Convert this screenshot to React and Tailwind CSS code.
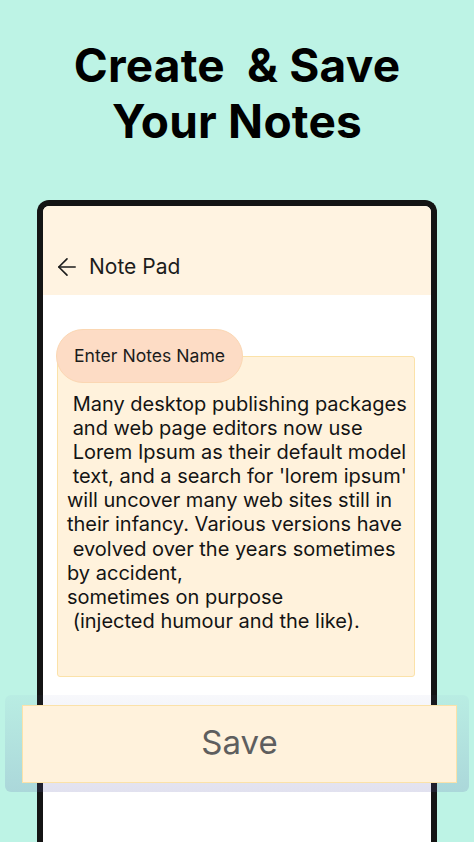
import { ArrowLeft } from 'lucide-react';

const lines = [
  ' Many desktop publishing packages',
  ' and web page editors now use',
  ' Lorem Ipsum as their default model',
  ' text, and a search for \'lorem ipsum\'',
  'will uncover many web sites still in',
  'their infancy. Various versions have',
  ' evolved over the years sometimes',
  'by accident,',
  'sometimes on purpose',
  ' (injected humour and the like).',
];

const App = () => {
  return (
    <div
      className="relative h-[842px] w-[474px] overflow-hidden bg-[#bdf3e5]"
      style={{ fontFamily: 'Inter, "Noto Sans", sans-serif' }}
    >
      <h1 className="pt-[37px] text-center text-[46px] font-bold leading-[56px] tracking-[0.2px] text-black whitespace-pre">
        {'Create  & Save\nYour Notes'}
      </h1>

      <div className="mx-[37px] mt-[51px] h-[700px] rounded-t-[12px] border-[6px] border-b-0 border-[#141414] bg-white">
        <div className="flex h-[89px] items-end rounded-t-[6px] bg-[#fff3e1] px-[10px] pb-[14px]">
          <div className="flex items-center gap-[8px] text-[#1c1c1c]">
            <ArrowLeft size={28} strokeWidth={1.4} />
            <span className="text-[21px] leading-[28px]">Note Pad</span>
          </div>
        </div>

        <div className="px-[13px] pt-[34px]">
          <div className="relative z-10 flex h-[54px] w-[187px] items-center rounded-full border border-[#fbd7b3] bg-[#fddcc5] pl-[17px]">
            <span className="text-[17.6px] text-[#1c1c1c]">Enter Notes Name</span>
          </div>
          <div className="-mt-[27px] ml-[1px] h-[321px] w-[358px] rounded-[3px] border border-[#fbe2a9] bg-[#fff2dc] pl-[9px] pt-[35px]">
            {lines.map((line) => (
              <p key={line} className="whitespace-pre text-[20px] leading-[24.1px] text-[#141414]">
                {line}
              </p>
            ))}
          </div>
        </div>
      </div>

      <div className="absolute left-[5px] top-[695px] h-[97px] w-[464px] rounded-[6px] bg-gradient-to-b from-[#6a78b8]/5 to-[#5a5aa8]/18">
        <button className="absolute left-[17px] top-[10px] h-[78px] w-[435px] border border-[#fbe2a9] bg-[#fff2dc] pb-[3px] text-[33px] text-[#5e5e5e]">
          Save
        </button>
      </div>
    </div>
  );
};

export default App;
